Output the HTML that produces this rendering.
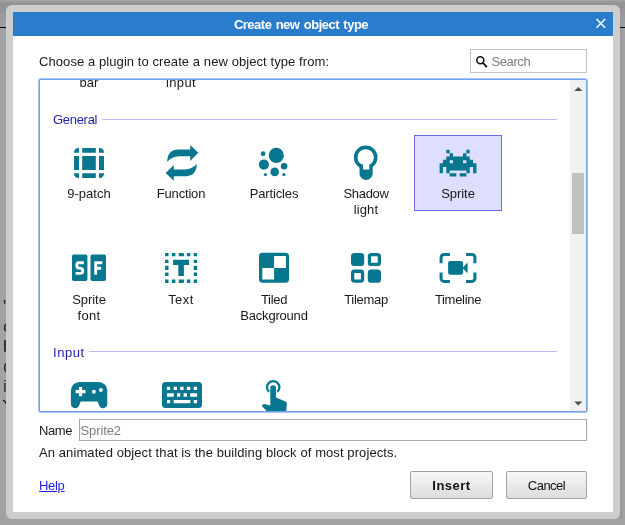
<!DOCTYPE html>
<html>
<head>
<meta charset="utf-8">
<title>Create new object type</title>
<style>
*{box-sizing:border-box;margin:0;padding:0}
html,body{width:625px;height:525px;overflow:hidden}
body{position:relative;background:#a2a2a2;font-family:"Liberation Sans",sans-serif;font-size:13px;color:#1a1a1a}
.abs{position:absolute}
#bgtop{left:0;top:0;width:625px;height:27px;background:linear-gradient(#a6a6a6 0,#979797 2px,#929292 4px,#949494 8px,#a0a0a0 27px)}
#bgline1{left:0;top:27px;width:6px;height:1px;background:#000}
#bgline2{left:620px;top:27px;width:5px;height:1px;background:#000}
.mk{left:3px;width:2px;background:#222}
#dlg{left:6px;top:5px;width:614px;height:514px;background:#cdcdcd;border-radius:6px}
#inner{left:13px;top:12px;width:600px;height:500px;background:#fff}
#title{left:13px;top:12px;width:600px;height:24px;background:#2a7dcd}
#titletxt{left:13px;top:13.2px;width:576px;height:24px;line-height:24px;text-align:center;color:#fff;font-weight:bold;font-size:13px;letter-spacing:-0.5px;word-spacing:1.2px}
#prompt{left:39px;top:54px;line-height:16px;white-space:nowrap;letter-spacing:0.08px}
#search{left:470px;top:49px;width:117px;height:24px;border:1px solid #c3c3c3;background:#fff}
#searchtxt{left:491.5px;top:54px;line-height:16px;color:#7b7b7b;letter-spacing:-0.4px}
#list{left:38px;top:78px;width:550px;height:335px;border:1px solid #a4c3f5;border-radius:2.5px;background:#fff;overflow:hidden}
#listin{left:39px;top:79px;width:548px;height:333px;border:1px solid #72a2ec;border-radius:1px;pointer-events:none}
#lc{left:-39px;top:-79px;width:625px;height:525px}
.lbl{text-align:center;line-height:16px;white-space:nowrap;width:120px;letter-spacing:-0.3px}
.hd{color:#1c1cb6;line-height:16px;letter-spacing:-0.5px}
.hl{height:1px;background:#bcbcf4}
#sel{left:414px;top:135px;width:88px;height:76px;background:#dedeff;border:1px solid #6c6cf2}
#track{left:570px;top:80px;width:16px;height:331px;background:#f1f1f1}
#thumb{left:572px;top:173px;width:12px;height:61px;background:#c1c1c1}
#namelbl{left:39px;top:423px;line-height:16px;letter-spacing:-0.4px}
#nameinp{left:79px;top:419px;width:508px;height:22px;border:1px solid #a9a9a9;background:#fff}
#nametxt{left:80.5px;top:423px;line-height:16px;color:#7d7d7d;letter-spacing:-0.1px}
#desc{left:39px;top:445px;line-height:16px;white-space:nowrap;letter-spacing:0.09px}
#help{left:39px;top:478px;line-height:16px;color:#1c1cee;text-decoration:underline;letter-spacing:-0.3px}
.btn{top:471px;height:28px;border:1px solid #a3a3a3;border-radius:2px;background:linear-gradient(#f7f7f7,#dddddd);text-align:center;line-height:26px;padding-top:1px;color:#111}
#ins{left:410px;width:83px;font-weight:bold;letter-spacing:0.5px}
#can{left:506px;width:81px;letter-spacing:-0.5px}
svg{position:absolute;overflow:visible}
</style>
</head>
<body><div id="root" style="position:absolute;left:0;top:0;width:625px;height:525px;will-change:transform;">
<div class="abs" id="bgtop"></div>
<div class="abs" id="bgline1"></div>
<div class="abs" id="bgline2"></div>
<svg style="left:0;top:0" width="6" height="525" viewBox="0 0 6 525" fill="none" stroke="#262626" stroke-width="1.5">
<path d="M4.4 300L4.7 303.8"/>
<path d="M5.9 323.8Q3.5 327.6 5.9 331.4"/>
<path d="M4.9 340V351.8M4.9 344.3H6M4.9 350.6H6" stroke-width="1.7"/>
<path d="M5.9 363.4Q3.5 367.6 5.9 371.8"/>
<path d="M4.9 380V381.2M4.9 383V391.8" stroke="#444" stroke-width="1.8"/>
<path d="M3 400.2L5.6 402L5.8 404"/>
</svg>
<div class="abs" style="left:620px;top:28px;width:1.5px;height:491px;background:#999"></div>

<div class="abs" id="dlg"></div>
<div class="abs" id="inner"></div>
<div class="abs" id="title"></div>
<div class="abs" id="titletxt">Create new object type</div>
<svg style="left:595.6px;top:19px" width="10" height="10" viewBox="0 0 10 10"><path d="M0.5 0.1L9.2 8.8M9.2 0.1L0.5 8.8" stroke="#fff" stroke-width="1.45" fill="none"/></svg>

<div class="abs" id="prompt">Choose a plugin to create a new object type from:</div>
<div class="abs" id="search"></div>
<svg style="left:475px;top:55px" width="14" height="14" viewBox="0 0 14 14"><circle cx="5.3" cy="5.2" r="3.5" stroke="#111" stroke-width="1.6" fill="none"/><path d="M7.9 7.8L11.9 12.1" stroke="#111" stroke-width="1.9"/></svg>
<div class="abs" id="searchtxt">Search</div>

<div class="abs" id="list"><div class="abs" id="lc">
  <div class="abs lbl" style="left:29px;top:75px;letter-spacing:0px">bar</div>
  <div class="abs lbl" style="left:121px;top:75px;letter-spacing:0.4px">input</div>

  <div class="abs hd" style="left:53px;top:112px;letter-spacing:-0.3px">General</div>
  <div class="abs hl" style="left:102px;top:119px;width:455px"></div>

  <div class="abs" id="sel"></div>

  <!-- row 1 labels -->
  <div class="abs lbl" style="left:29px;top:186px;letter-spacing:0px">9-patch</div>
  <div class="abs lbl" style="left:121px;top:186px;letter-spacing:-0.18px">Function</div>
  <div class="abs lbl" style="left:214px;top:186px;letter-spacing:-0.13px">Particles</div>
  <div class="abs lbl" style="left:306px;top:186px">Shadow<br><span style="letter-spacing:0.1px">light</span></div>
  <div class="abs lbl" style="left:398px;top:186px;letter-spacing:-0.05px">Sprite</div>
  <!-- row 2 labels -->
  <div class="abs lbl" style="left:29px;top:292px;letter-spacing:-0.05px">Sprite<br><span style="letter-spacing:0.3px">font</span></div>
  <div class="abs lbl" style="left:121px;top:292px;letter-spacing:0.45px">Text</div>
  <div class="abs lbl" style="left:214px;top:292px">Tiled<br><span style="letter-spacing:-0.2px">Background</span></div>
  <div class="abs lbl" style="left:306px;top:292px;letter-spacing:-0.3px">Tilemap</div>
  <div class="abs lbl" style="left:398px;top:292px;letter-spacing:-0.3px">Timeline</div>

  <div class="abs hd" style="left:53px;top:345px;letter-spacing:0.55px">Input</div>
  <div class="abs hl" style="left:89px;top:351px;width:468px"></div>

  <!-- ICONS -->
  <svg id="icons" style="left:0;top:0" width="625" height="525" viewBox="0 0 625 525" fill="#07768f">
    <rect x="74" y="148" width="30" height="30" rx="4.5"/>
    <path d="M80.6 147V179M97.4 147V179M73 154.4H105M73 171.6H105" stroke="#fff" stroke-width="3.2" fill="none"/>
    <g transform="translate(182 162.9)"><path d="M8.2 -17.8L16.3 -10.2L8.2 -2L8.2 -6.7L-3 -6.7Q-10 -6.5 -14.8 -1.2Q-14.5 -13.3 -3.5 -13.3L8.2 -13.3Z"/><path d="M8.2 -17.8L16.3 -10.2L8.2 -2L8.2 -6.7L-3 -6.7Q-10 -6.5 -14.8 -1.2Q-14.5 -13.3 -3.5 -13.3L8.2 -13.3Z" transform="rotate(180)"/></g>
    <circle cx="276.3" cy="155.4" r="7.6"/>
    <circle cx="263.1" cy="153.7" r="2.4"/>
    <circle cx="263.9" cy="164.6" r="5.1"/>
    <circle cx="274.7" cy="171.9" r="4.3"/>
    <circle cx="284.1" cy="166.3" r="3.3"/>
    <circle cx="265.5" cy="174.6" r="1.6"/>
    <circle cx="283.9" cy="174.6" r="1.6"/>
    <circle cx="365.7" cy="157.4" r="10" fill="none" stroke="#07768f" stroke-width="3.6"/>
    <path d="M359.5 164.5H372.7V173.4A6.6 6.6 0 0 1 359.5 173.4Z"/>
    <path d="M363 160H369.3V169.6H363Z" fill="#fff"/>
    <path d="M446.30 149.80H449.65V153.15H446.30ZM466.40 149.80H469.75V153.15H466.40ZM449.65 153.15H453.00V157.00H449.65ZM463.05 153.15H466.40V157.00H463.05ZM446.30 156.50H469.75V160.35H446.30ZM442.95 159.85H449.65V163.70H442.95ZM453.00 159.85H463.05V163.70H453.00ZM466.40 159.85H473.10V163.70H466.40ZM439.60 163.20H476.45V167.05H439.60ZM439.60 166.55H442.95V170.40H439.60ZM446.30 166.55H469.75V170.40H446.30ZM473.10 166.55H476.45V170.40H473.10ZM439.60 169.90H442.95V173.25H439.60ZM446.30 169.90H449.65V173.25H446.30ZM466.40 169.90H469.75V173.25H466.40ZM473.10 169.90H476.45V173.25H473.10ZM449.65 173.25H456.35V176.60H449.65ZM459.70 173.25H466.40V176.60H459.70Z"/>
    <rect x="72" y="254.6" width="15.4" height="26.5" rx="1.8"/><rect x="90.5" y="254.6" width="15.5" height="26.5" rx="1.8"/>
    <path d="M83.8 262.8H78.6Q76.8 262.8 76.8 265.4Q76.8 268.1 79.4 268.1Q82.8 268.1 82.8 270.8Q82.8 273.4 80.4 273.4H75.6" stroke="#fff" stroke-width="2.9" fill="none"/>
    <path d="M102.3 262.8H95.7V274.8M95.7 268.3H101.2" stroke="#fff" stroke-width="2.9" fill="none"/>
    <path d="M165.1 252.9H168.5V256.3H165.1ZM165.1 279.6H168.5V282.9H165.1ZM171.9 252.9H175.4V256.3H171.9ZM171.9 279.6H175.4V282.9H171.9ZM178.8 252.9H183.9V256.3H178.8ZM178.8 279.6H183.9V282.9H178.8ZM186.9 252.9H190.3V256.3H186.9ZM186.9 279.6H190.3V282.9H186.9ZM193.7 252.9H197.1V256.3H193.7ZM193.7 279.6H197.1V282.9H193.7ZM165.1 259.7H168.5V263.1H165.1ZM193.7 259.7H197.1V263.1H193.7ZM165.1 265.7H168.5V270.0H165.1ZM193.7 265.7H197.1V270.0H193.7ZM165.1 272.6H168.5V276.0H165.1ZM193.7 272.6H197.1V276.0H193.7Z"/>
    <path d="M173.1 259.7H189.1V264.9H183.9V276H178.3V264.9H173.1Z"/>
    <rect x="259" y="252.8" width="30" height="30" rx="3.5"/>
    <path d="M274.1 256.1H285.9V268H274.1V279.6H262.3V268H274.1Z" fill="#fff"/>
    <rect x="351" y="252.9" width="13.2" height="13.2" rx="3.4"/><rect x="367.8" y="269.6" width="13.2" height="13.2" rx="3.4"/>
    <rect x="369.45" y="254.55" width="9.9" height="9.9" rx="1.8" fill="none" stroke="#07768f" stroke-width="3.3"/><rect x="352.65" y="271.25" width="9.9" height="9.9" rx="1.8" fill="none" stroke="#07768f" stroke-width="3.3"/>
    <path d="M449.9 254.4H444.1A3 3 0 0 0 441.1 257.4V263.2M466.1 254.4H471.9A3 3 0 0 1 474.9 257.4V263.2M449.9 281.4H444.1A3 3 0 0 1 441.1 278.4V272.6M466.1 281.4H471.9A3 3 0 0 0 474.9 278.4V272.6" fill="none" stroke="#07768f" stroke-width="3"/>
    <rect x="448.1" y="260.9" width="15" height="13.9" rx="2.2"/><path d="M462.5 268L467.6 262.6V273.3Z"/>
    <path d="M79.5 381.9H98.7A8.6 8.6 0 0 1 107.3 390.5V403.8A4.2 4.2 0 0 1 99.4 405.9L97.5 401.6H80.7L78.8 405.9A4.2 4.2 0 0 1 70.9 403.8V390.5A8.6 8.6 0 0 1 79.5 381.9Z"/>
    <path d="M80.55 386.9V396.3M75.6 391.6H85.5" stroke="#fff" stroke-width="3.2" fill="none"/><circle cx="93.85" cy="391.7" r="1.95" fill="#fff"/><circle cx="100.9" cy="390" r="1.95" fill="#fff"/>
    <rect x="162" y="381.9" width="40" height="26.1" rx="3.5"/>
    <path d="M167 386.7H170.2V390H167ZM173.6 386.7H177V390H173.6ZM180.2 386.7H183.6V390H180.2ZM186.8 386.7H190.3V390H186.8ZM193.7 386.7H197.1V390H193.7ZM167 393.3H173.8V396.8H167ZM177 393.3H180.3V396.8H177ZM183.6 393.3H187V396.8H183.6ZM190.2 393.3H197.1V396.8H190.2ZM167 399.9H170.2V403.3H167ZM173.6 399.9H190.3V403.3H173.6ZM193.7 399.9H197.1V403.3H193.7Z" fill="#fff"/>
    <path d="M269.1 391.9A6.2 6.2 0 1 1 277.3 391.9" fill="none" stroke="#07768f" stroke-width="2.3"/>
    <path d="M270.3 388A2.85 2.85 0 0 1 276 388V397.4L285.5 401.4Q287 402.2 286.9 403.6L286 413H268.6L262.3 406.4Q261.6 405.2 263 404.4Q264 403.9 265.5 404.3L270.3 405.4Z"/>
  </svg>

  <div class="abs" id="track"></div>
  <div class="abs" id="thumb"></div>
  <svg style="left:573.7px;top:86.6px" width="8.6" height="4.5" viewBox="0 0 9 5"><path d="M0 4.5L4.5 0L9 4.5Z" fill="#505050"/></svg>
  <svg style="left:573.7px;top:400.9px" width="8.6" height="4.5" viewBox="0 0 9 5"><path d="M0 0.5L4.5 5L9 0.5Z" fill="#505050"/></svg>
</div></div>

<div class="abs" id="listin"></div>
<div class="abs" id="namelbl">Name</div>
<div class="abs" id="nameinp"></div>
<div class="abs" id="nametxt">Sprite2</div>
<div class="abs" id="desc">An animated object that is the building block of most projects.</div>
<div class="abs" id="help">Help</div>
<div class="abs btn" id="ins">Insert</div>
<div class="abs btn" id="can">Cancel</div>
</div></body>
</html>
